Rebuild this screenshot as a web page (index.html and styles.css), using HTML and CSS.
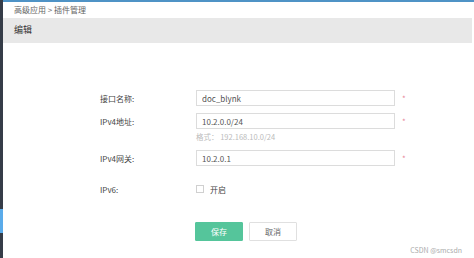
FILE: index.html
```html
<!DOCTYPE html>
<html lang="zh-CN">
<head>
    <meta charset="UTF-8">
    <title>插件管理</title>
    <link rel="stylesheet" href="styles.css">
</head>
<body>
    <div class="sidebar">
        <div class="side-active"></div>
    </div>
    <div class="main">
        <div class="crumb">高级应用 &gt; 插件管理</div>
        <div class="panel-head">编辑</div>
        <form class="edit-form">
            <div class="row">
                <label class="lbl">接口名称:</label>
                <input class="field" type="text" value="doc_blynk">
                <span class="req">*</span>
            </div>
            <div class="row">
                <label class="lbl">IPv4地址:</label>
                <input class="field" type="text" value="10.2.0.0/24">
                <span class="req">*</span>
            </div>
            <div class="hint">格式： 192.168.10.0/24</div>
            <div class="row">
                <label class="lbl">IPv4网关:</label>
                <input class="field" type="text" value="10.2.0.1">
                <span class="req">*</span>
            </div>
            <div class="row row-check">
                <label class="lbl">IPv6:</label>
                <span class="check"></span>
                <span class="check-text">开启</span>
            </div>
            <div class="actions">
                <button type="button" class="btn btn-save">保存</button>
                <button type="button" class="btn btn-cancel">取消</button>
            </div>
        </form>
        <div class="mark">CSDN @smcsdn</div>
    </div>
</body>
</html>
```

FILE: styles.css
```css
body {
    margin: 0;
    padding: 0;
    display: flex;
    height: 258px;
    overflow: hidden;
    font-family: "Noto Sans CJK SC", "Liberation Sans", sans-serif;
    color: #333;
    background-color: #fff;
}

.sidebar {
    width: 3px;
    background-color: #353c48;
    padding-top: 209px;
}

.side-active {
    height: 24px;
    background-color: #5aabea;
}

.main {
    flex: 1;
    border-top: 2px solid #4f93c6;
    position: relative;
}

.crumb {
    height: 16px;
    line-height: 15px;
    padding-left: 11px;
    font-size: 8px;
    color: #666;
}

.panel-head {
    height: 25px;
    line-height: 24px;
    margin-right: 2px;
    padding-left: 11px;
    background-color: #e8e8e8;
    font-size: 9px;
    color: #333;
}

.edit-form {
    padding-top: 47px;
    padding-left: 97px;
}

.row {
    display: flex;
    align-items: center;
    height: 16px;
    margin-bottom: 7px;
}

.lbl {
    width: 96px;
    font-size: 8px;
    color: #444;
}

.field {
    box-sizing: border-box;
    width: 199px;
    height: 16px;
    margin: 0;
    padding: 0 5px;
    border: 1px solid #dcdcdc;
    font-family: "Noto Sans CJK SC", "Liberation Sans", sans-serif;
    font-size: 8px;
    color: #555;
    outline: none;
}

.req {
    margin-left: 7px;
    font-size: 8px;
    color: #e88a9a;
}

.hint {
    margin-top: -5px;
    margin-bottom: 7px;
    padding-left: 96px;
    height: 12px;
    line-height: 12px;
    font-size: 7.5px;
    color: #bbb;
}

.row-check {
    margin-top: 15px;
}

.check {
    box-sizing: border-box;
    width: 8px;
    height: 8px;
    border: 1px solid #d0d0d0;
}

.check-text {
    margin-left: 6px;
    font-size: 8px;
    color: #444;
}

.actions {
    display: flex;
    gap: 6px;
    margin-top: 25px;
    padding-left: 95px;
}

.btn {
    width: 48px;
    height: 19px;
    padding: 0;
    font-family: "Noto Sans CJK SC", "Liberation Sans", sans-serif;
    font-size: 8px;
    border-radius: 1px;
}

.btn-save {
    background-color: #55c59b;
    border: 1px solid #55c59b;
    color: #fff;
}

.btn-cancel {
    background-color: #fff;
    border: 1px solid #e0e0e0;
    color: #666;
}

.mark {
    position: absolute;
    right: 12px;
    bottom: 3px;
    font-size: 7px;
    color: #aaa;
}
```
